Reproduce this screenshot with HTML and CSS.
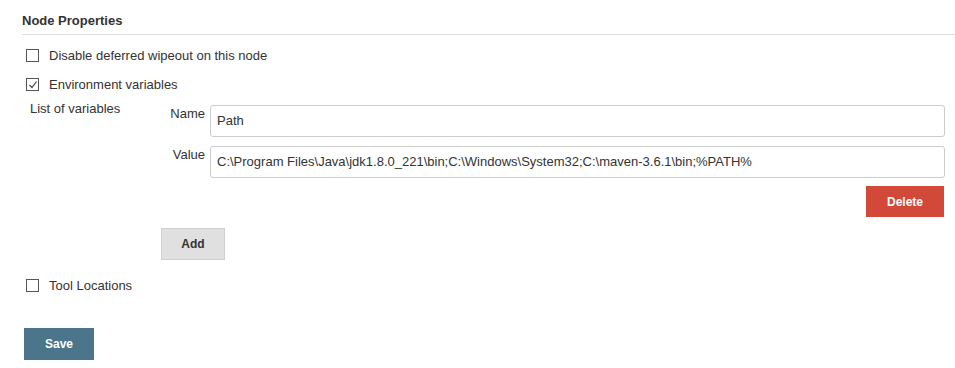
FILE: index.html
```html
<!DOCTYPE html>
<html>
<head>
<meta charset="utf-8">
<link rel="stylesheet" href="styles.css">
</head>
<body>
<div class="page">
  <div class="section-header">Node Properties</div>

  <div class="check-row first">
    <span class="box"></span>
    <span class="check-label">Disable deferred wipeout on this node</span>
  </div>
  <div class="check-row">
    <span class="box"><svg width="12" height="12" viewBox="0 0 12 12"><polyline points="2.5,6 5,8.5 9.5,2.5" fill="none" stroke="#444" stroke-width="1.2"/></svg></span>
    <span class="check-label">Environment variables</span>
  </div>

  <div class="vars">
    <div class="vars-label">List of variables</div>
    <div class="vars-body">
      <div class="field-grid">
        <div class="field-label">Name</div>
        <div class="field-input">Path</div>
        <div class="field-label">Value</div>
        <div class="field-input">C:\Program Files\Java\jdk1.8.0_221\bin;C:\Windows\System32;C:\maven-3.6.1\bin;%PATH%</div>
      </div>
      <div class="delete-row"><button class="btn btn-delete">Delete</button></div>
      <button class="btn btn-add">Add</button>
    </div>
  </div>

  <div class="check-row tool">
    <span class="box"></span>
    <span class="check-label">Tool Locations</span>
  </div>

  <button class="btn btn-save">Save</button>
</div>
</body>
</html>
```
FILE: styles.css
```css
html, body {
  margin: 0;
  padding: 0;
  background: #fff;
}
body {
  font-family: "Liberation Sans", Arial, sans-serif;
  font-size: 13px;
  color: #333;
}
.page {
  padding-left: 22px;
}
.section-header {
  box-sizing: border-box;
  height: 35px;
  padding-top: 13px;
  line-height: 16px;
  font-weight: bold;
  border-bottom: 1px solid #ddd;
}
.check-row {
  display: flex;
  align-items: center;
  height: 29px;
  padding-left: 4px;
}
.check-row.first {
  margin-top: 6px;
}
.check-row.tool {
  margin-top: 11px;
}
.box {
  box-sizing: border-box;
  width: 13px;
  height: 13px;
  border: 1px solid #555;
  display: inline-flex;
  align-items: center;
  justify-content: center;
  margin-right: 10px;
  background: #fff;
}
.box svg {
  display: block;
  flex: none;
}
.check-label {
  line-height: 16px;
}
.vars {
  display: flex;
  padding-top: 2px;
}
.vars-label {
  width: 139px;
  padding-left: 8px;
  box-sizing: border-box;
  line-height: 16px;
}
.vars-body {
  flex: 1;
  padding-top: 4px;
  padding-right: 10px;
}
.field-grid {
  display: grid;
  grid-template-columns: 44px 1fr;
  column-gap: 5px;
  row-gap: 9px;
}
.field-label {
  text-align: right;
  line-height: 16px;
  padding-top: 1px;
  color: #333;
}
.field-input {
  box-sizing: border-box;
  height: 32px;
  border: 1px solid #ccc;
  border-radius: 3px;
  padding: 0 6px;
  line-height: 30px;
  white-space: nowrap;
  overflow: hidden;
  color: #333;
}
.delete-row {
  display: flex;
  justify-content: flex-end;
  margin-top: 8px;
  padding-right: 1px;
}
.btn {
  font-family: "Liberation Sans", Arial, sans-serif;
  font-size: 12px;
  font-weight: bold;
  border: none;
  padding: 0;
  margin: 0;
  display: block;
  cursor: pointer;
}
.btn-delete {
  width: 78px;
  height: 31px;
  background: #d24939;
  color: #fff;
}
.btn-add {
  margin-top: 11px;
  width: 64px;
  height: 32px;
  background: #e0e0e0;
  border: 1px solid #cfcfcf;
  color: #333;
}
.btn-save {
  margin-top: 28px;
  margin-left: 2px;
  width: 70px;
  height: 32px;
  background: #4b758b;
  color: #fff;
}
```
